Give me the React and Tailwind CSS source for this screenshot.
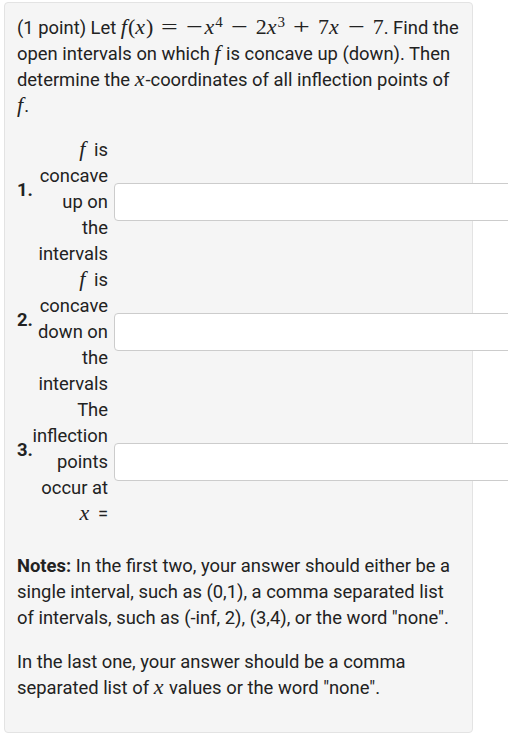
import React from "react";

const M = ({ children, className = "" }) => (
  <span className={"font-['Liberation_Serif',serif] text-[22px] leading-[0] " + className}>{children}</span>
);
const I = ({ children, className = "" }) => (
  <i className={"font-['Liberation_Serif',serif] italic pr-[1px] " + className}>{children}</i>
);
const Op = ({ children, className = "mx-[8px]" }) => (
  <span className={"inline-block w-[17px] text-center scale-x-[1.35] font-['Liberation_Serif',serif] " + className}>
    {children}
  </span>
);

function Item({ n, lines }) {
  return (
    <div className="flex h-[130px]">
      <div className="w-[16px] shrink-0 mt-[40px] font-bold">{n}.</div>
      <div className="w-[75px] shrink-0 min-w-0 flex flex-col items-end">
        {lines.map((l, i) => (
          <div key={i} className="whitespace-nowrap">{l}</div>
        ))}
      </div>
      <div className="flex items-center ml-[6px]">
        <input className="w-[420px] h-[38px] bg-white border border-[#cccccc] rounded-[4px] outline-none" />
      </div>
    </div>
  );
}

export default function App() {
  return (
    <div className="w-[508px] h-[735px] overflow-hidden bg-white font-['Roboto',sans-serif] text-[18.4px] leading-[26px] text-[#222]">
      <div className="ml-[4px] mt-[2px] w-[469px] h-[731px] bg-[#f5f5f5] border border-[#e3e3e3] rounded-[4px] pt-[12px] pl-[12px] pr-[12px]">
        <p className="mb-[18px] whitespace-nowrap">
          (1 point) Let{" "}
          <M>
            <I>f</I>(<I>x</I>)<Op>=</Op><Op className="mr-[1px]">−</Op><I>x</I>
            <sup className="text-[15px]">4</sup>
            <Op>−</Op>2<I>x</I>
            <sup className="text-[15px]">3</sup>
            <Op>+</Op>7<I>x</I>
            <Op>−</Op>7
          </M>
          . Find the
          <br />
          open intervals on which <M><I>f</I></M> is concave up (down). Then
          <br />
          determine the <M><I>x</I></M>-coordinates of all inflection points of
          <br />
          <M><I>f</I></M>.
        </p>
        <Item
          n={1}
          lines={[
            <span><M><I className="mr-[3px]">f</I></M> is</span>,
            "concave",
            "up on",
            "the",
            "intervals",
          ]}
        />
        <Item
          n={2}
          lines={[
            <span><M><I className="mr-[3px]">f</I></M> is</span>,
            "concave",
            "down on",
            "the",
            "intervals",
          ]}
        />
        <Item
          n={3}
          lines={[
            "The",
            "inflection",
            "points",
            "occur at",
            <span><M><I className="mr-[3px]">x</I></M> =</span>,
          ]}
        />
        <p className="mt-[26px] mb-[18px] whitespace-nowrap">
          <b>Notes:</b> In the first two, your answer should either be a
          <br />
          single interval, such as (0,1), a comma separated list
          <br />
          of intervals, such as (-inf, 2), (3,4), or the word "none".
        </p>
        <p className="whitespace-nowrap">
          In the last one, your answer should be a comma
          <br />
          separated list of <M><I>x</I></M> values or the word "none".
        </p>
      </div>
    </div>
  );
}
